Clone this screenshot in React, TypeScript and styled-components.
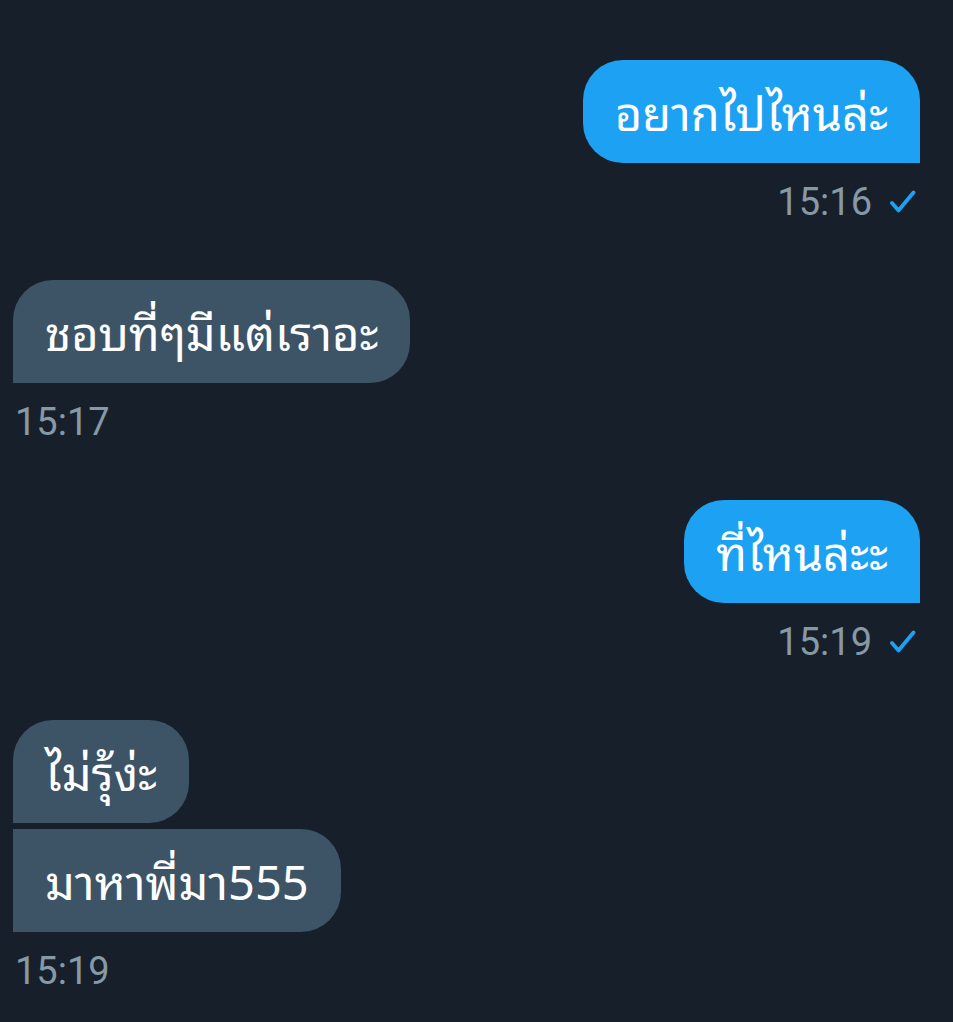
import React from "react";
import styled, { createGlobalStyle } from "styled-components";

const Global = createGlobalStyle`
  html, body { margin: 0; padding: 0; background: #17202a; }
  body { font-family: "Noto Sans Thai Looped", "Noto Sans Thai UI", Loma, Garuda, "Noto Sans Thai", "Noto Sans", Roboto, sans-serif; }
`;

const Screen = styled.div`
  width: 953px;
  height: 1022px;
  background: #17202a;
  box-sizing: border-box;
  padding: 60px 33px 0 13px;
  display: flex;
  flex-direction: column;
  overflow: hidden;
`;

const Group = styled.div<{ $mine?: boolean }>`
  display: flex;
  flex-direction: column;
  align-items: ${(p) => (p.$mine ? "flex-end" : "flex-start")};
  gap: 6px;
  margin-bottom: 56px;
`;

type Pos = "single" | "first" | "last";

const Bubble = styled.div<{ $mine?: boolean; $pos?: Pos }>`
  background: ${(p) => (p.$mine ? "#1da1f2" : "#3d5466")};
  color: #ffffff;
  font-size: 47px;
  line-height: 55px;
  padding: 22px 32px 26px;
  white-space: nowrap;
  border-radius: ${(p) => {
    if (p.$mine) return "40px 40px 0 40px";
    if (p.$pos === "last") return "0 40px 40px 0";
    return "40px 40px 40px 0";
  }};
`;

const Meta = styled.div<{ $mine?: boolean }>`
  display: flex;
  align-items: center;
  gap: 16px;
  margin-top: 11px;
  margin-left: ${(p) => (p.$mine ? "0" : "2px")};
  margin-right: ${(p) => (p.$mine ? "4px" : "0")};
  font-family: Roboto, "Noto Sans", sans-serif;
  font-size: 38px;
  line-height: 44px;
  color: #8899a6;
`;

const Check = () => (
  <svg width="28" height="24" viewBox="0 0 28 24" fill="none">
    <path d="M4 13 L10.5 20.5 L25.5 2.5" stroke="#1da1f2" strokeWidth="3.8" strokeLinecap="round" strokeLinejoin="round" />
  </svg>
);

export default function App() {
  return (
    <>
      <Global />
      <Screen>
        <Group $mine>
          <Bubble $mine>อยากไปไหนล่ะ</Bubble>
          <Meta $mine>
            15:16 <Check />
          </Meta>
        </Group>
        <Group>
          <Bubble>ชอบที่ๆมีแต่เราอะ</Bubble>
          <Meta>15:17</Meta>
        </Group>
        <Group $mine>
          <Bubble $mine>ที่ไหนล่ะะ</Bubble>
          <Meta $mine>
            15:19 <Check />
          </Meta>
        </Group>
        <Group>
          <Bubble $pos="first">ไม่รุ้ง่ะ</Bubble>
          <Bubble $pos="last">มาหาพี่มา555</Bubble>
          <Meta>15:19</Meta>
        </Group>
      </Screen>
    </>
  );
}
